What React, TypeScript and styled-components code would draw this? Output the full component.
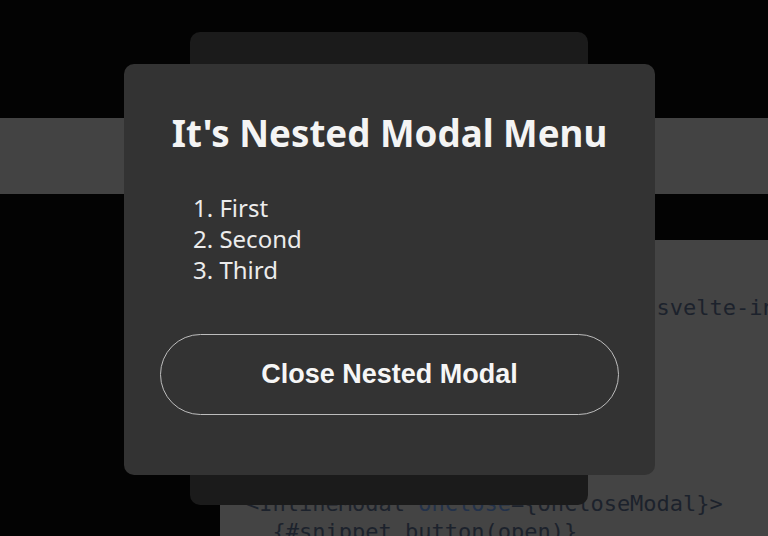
import styled, { createGlobalStyle } from "styled-components";

const GlobalStyle = createGlobalStyle`
  html, body {
    margin: 0;
    padding: 0;
    background: #030303;
    overflow: hidden;
  }
  body {
    width: 768px;
    height: 536px;
  }
`;

const codeLines = [
  "<script>",
  '  import { InlineModal } from "svelte-inline-modal";',
  "  let open = $state(false);",
  "  function onCloseModal() {",
  "    open = false;",
  "  }",
  "</script>",
  "",
];

const App = () => {
  return (
    <>
      <GlobalStyle />
      <Page>
        <Band />
        <CodeSection>
          <CodeBlock>
            {codeLines.map((line, i) => (
              <CodeLine key={i}>{line || " "}</CodeLine>
            ))}
            <CodeLine>
              <Tag>&lt;InlineModal </Tag>
              <Attr>onClose</Attr>
              <Tag>={"{"}onCloseModal{"}"}&gt;</Tag>
            </CodeLine>
            <CodeLine>{"  {#snippet button(open)}"}</CodeLine>
          </CodeBlock>
        </CodeSection>
      </Page>
      <Overlay>
        <BackModal />
        <FrontModal>
          <Title>It's Nested Modal Menu</Title>
          <MenuList>
            <li>First</li>
            <li>Second</li>
            <li>Third</li>
          </MenuList>
          <CloseButton type="button">Close Nested Modal</CloseButton>
        </FrontModal>
      </Overlay>
    </>
  );
};

export default App;

const Page = styled.div`
  display: flex;
  flex-direction: column;
  padding-top: 118px;
  height: 536px;
  box-sizing: border-box;
  overflow: hidden;
`;

const Band = styled.div`
  flex-shrink: 0;
  height: 76px;
  background: #434343;
`;

const CodeSection = styled.div`
  flex-shrink: 0;
  display: flex;
  padding-left: 220px;
  margin-top: 46px;
`;

const CodeBlock = styled.pre`
  flex: 1;
  margin: 0;
  padding: 26px 0 20px 26px;
  background: #444444;
  font-family: "DejaVu Sans Mono", monospace;
  font-size: 22px;
  line-height: 28px;
  color: #1c222c;
  overflow: hidden;
`;

const CodeLine = styled.div`
  white-space: pre;
`;

const Tag = styled.span`
  color: #1c222c;
`;

const Attr = styled.span`
  color: #22314a;
`;

const Overlay = styled.div`
  position: fixed;
  inset: 0;
`;

const BackModal = styled.div`
  position: absolute;
  left: 190px;
  top: 32px;
  width: 398px;
  height: 473px;
  background: #1b1b1b;
  border-radius: 10px;
`;

const FrontModal = styled.div`
  position: absolute;
  left: 124px;
  top: 64px;
  width: 531px;
  height: 411px;
  box-sizing: border-box;
  padding: 46px 36px 0;
  display: flex;
  flex-direction: column;
  background: #333333;
  border-radius: 10px;
`;

const Title = styled.h1`
  margin: 0;
  text-align: center;
  font-family: "Noto Sans", sans-serif;
  font-weight: 700;
  font-size: 36.7px;
  line-height: 46px;
  color: #f4f4f4;
`;

const MenuList = styled.ol`
  margin: 36px 0 0 33px;
  padding: 0;
  list-style-position: inside;
  font-family: "Noto Sans", sans-serif;
  font-size: 24px;
  line-height: 31px;
  color: #ececec;
`;

const CloseButton = styled.button`
  margin-top: 49px;
  height: 81px;
  width: 100%;
  border: 1.5px solid #bdbdbd;
  border-radius: 41px;
  background: transparent;
  color: #f6f6f6;
  font-family: "Liberation Sans", Arial, sans-serif;
  font-weight: 700;
  font-size: 27px;
  cursor: pointer;
`;
